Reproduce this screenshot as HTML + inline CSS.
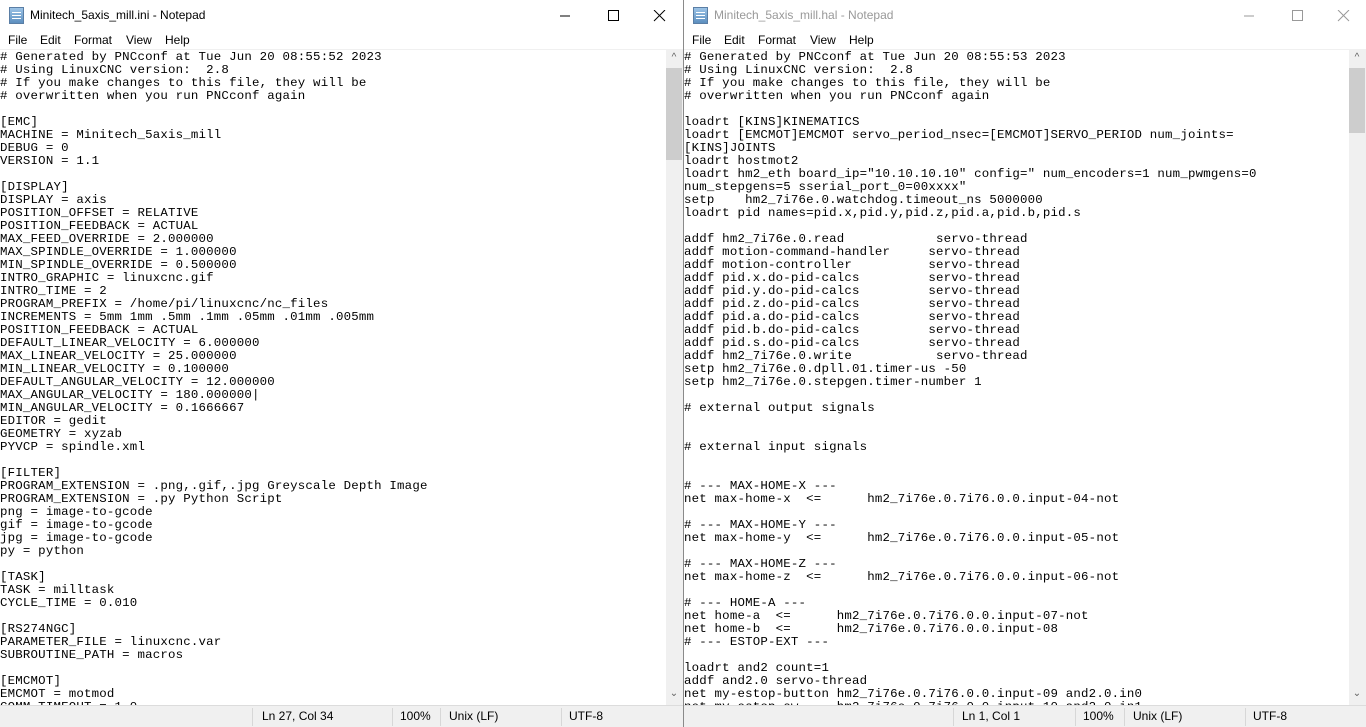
<!DOCTYPE html>
<html><head><meta charset="utf-8"><style>
*{margin:0;padding:0;box-sizing:border-box}
body{width:1366px;height:727px;overflow:hidden;background:#fff;font-family:"Liberation Sans",sans-serif;position:relative}
.win{position:absolute;top:0;height:727px;background:#fff;overflow:hidden}
.title{position:absolute;top:0;left:0;right:0;height:31px;font-size:12px;line-height:31px;padding-left:30px;color:#000}
.icon{position:absolute;left:9px;top:7px;width:15px;height:17px;background:linear-gradient(#9cc3e6,#5d8fbf);border:1px solid #5a7ea5}
.icon:before{content:"";position:absolute;left:2px;right:2px;top:4px;height:8px;background:repeating-linear-gradient(#fff 0 1px,transparent 1px 3px)}
.menu{position:absolute;top:32px;left:0;height:17px;font-size:12px;line-height:17px}
.menu span{position:absolute;top:0}
.text{position:absolute;top:51px;left:0;font-family:"Liberation Mono",monospace;font-size:12.4px;letter-spacing:0.2px;line-height:13px;white-space:pre;color:#000}
.sep{position:absolute;top:49px;left:0;right:0;height:1px;background:#f0f0f0}
.sb{position:absolute;top:50px;width:17px;height:655px;background:#f0f0f0}
.thumb{position:absolute;left:0;width:16px;background:#cdcdcd}
.arr{position:absolute;left:0;width:16px;font-size:10px;text-align:center;color:#606060}
.status{position:absolute;left:0;right:0;top:705px;height:22px;background:#f0f0f0;border-top:1px solid #dcdcdc;font-size:12px;line-height:21px}
.status span{position:absolute;top:0}
.status i{position:absolute;top:2px;width:1px;height:18px;background:#d7d7d7}
</style></head><body>

<div class="win" style="left:0;width:683px">
<div class="icon"></div>
<div class="title">Minitech_5axis_mill.ini - Notepad</div>
<svg style="position:absolute;left:560px;top:10px" width="110" height="12"><path d="M0 6H10" stroke="#000"/><rect x="48.5" y="0.5" width="10" height="10" fill="none" stroke="#000"/><path d="M94 0L105 11M105 0L94 11" stroke="#000"/></svg>
<div class="menu"><span style="left:8px">File</span><span style="left:40px">Edit</span><span style="left:74px">Format</span><span style="left:126px">View</span><span style="left:165px">Help</span></div>
<div class="sep"></div>
<div class="text"># Generated by PNCconf at Tue Jun 20 08:55:52 2023
# Using LinuxCNC version:  2.8
# If you make changes to this file, they will be
# overwritten when you run PNCconf again

[EMC]
MACHINE = Minitech_5axis_mill
DEBUG = 0
VERSION = 1.1

[DISPLAY]
DISPLAY = axis
POSITION_OFFSET = RELATIVE
POSITION_FEEDBACK = ACTUAL
MAX_FEED_OVERRIDE = 2.000000
MAX_SPINDLE_OVERRIDE = 1.000000
MIN_SPINDLE_OVERRIDE = 0.500000
INTRO_GRAPHIC = linuxcnc.gif
INTRO_TIME = 2
PROGRAM_PREFIX = /home/pi/linuxcnc/nc_files
INCREMENTS = 5mm 1mm .5mm .1mm .05mm .01mm .005mm
POSITION_FEEDBACK = ACTUAL
DEFAULT_LINEAR_VELOCITY = 6.000000
MAX_LINEAR_VELOCITY = 25.000000
MIN_LINEAR_VELOCITY = 0.100000
DEFAULT_ANGULAR_VELOCITY = 12.000000
MAX_ANGULAR_VELOCITY = 180.000000|
MIN_ANGULAR_VELOCITY = 0.1666667
EDITOR = gedit
GEOMETRY = xyzab
PYVCP = spindle.xml

[FILTER]
PROGRAM_EXTENSION = .png,.gif,.jpg Greyscale Depth Image
PROGRAM_EXTENSION = .py Python Script
png = image-to-gcode
gif = image-to-gcode
jpg = image-to-gcode
py = python

[TASK]
TASK = milltask
CYCLE_TIME = 0.010

[RS274NGC]
PARAMETER_FILE = linuxcnc.var
SUBROUTINE_PATH = macros

[EMCMOT]
EMCMOT = motmod
COMM_TIMEOUT = 1.0</div>
<div class="sb" style="left:666px"><div class="arr" style="top:2px">&#94;</div><div class="thumb" style="top:18px;height:92px"></div><div class="arr" style="top:638px">&#8964;</div></div>
<div class="status"><i style="left:252px"></i><span style="left:262px">Ln 27, Col 34</span><i style="left:392px"></i><span style="left:400px">100%</span><i style="left:440px"></i><span style="left:449px">Unix (LF)</span><i style="left:561px"></i><span style="left:569px">UTF-8</span></div>
</div>

<div style="position:absolute;left:683px;top:0;width:1px;height:727px;background:#8a8a8a"></div>

<div class="win" style="left:684px;width:682px">
<div class="icon"></div>
<div class="title" style="color:#999">Minitech_5axis_mill.hal - Notepad</div>
<svg style="position:absolute;left:560px;top:10px" width="110" height="12"><path d="M0 6H10" stroke="#999"/><rect x="48.5" y="0.5" width="10" height="10" fill="none" stroke="#999"/><path d="M94 0L105 11M105 0L94 11" stroke="#999"/></svg>
<div class="menu"><span style="left:8px">File</span><span style="left:40px">Edit</span><span style="left:74px">Format</span><span style="left:126px">View</span><span style="left:165px">Help</span></div>
<div class="sep"></div>
<div class="text"># Generated by PNCconf at Tue Jun 20 08:55:53 2023
# Using LinuxCNC version:  2.8
# If you make changes to this file, they will be
# overwritten when you run PNCconf again

loadrt [KINS]KINEMATICS
loadrt [EMCMOT]EMCMOT servo_period_nsec=[EMCMOT]SERVO_PERIOD num_joints=
[KINS]JOINTS
loadrt hostmot2
loadrt hm2_eth board_ip="10.10.10.10" config=" num_encoders=1 num_pwmgens=0
num_stepgens=5 sserial_port_0=00xxxx"
setp    hm2_7i76e.0.watchdog.timeout_ns 5000000
loadrt pid names=pid.x,pid.y,pid.z,pid.a,pid.b,pid.s

addf hm2_7i76e.0.read            servo-thread
addf motion-command-handler     servo-thread
addf motion-controller          servo-thread
addf pid.x.do-pid-calcs         servo-thread
addf pid.y.do-pid-calcs         servo-thread
addf pid.z.do-pid-calcs         servo-thread
addf pid.a.do-pid-calcs         servo-thread
addf pid.b.do-pid-calcs         servo-thread
addf pid.s.do-pid-calcs         servo-thread
addf hm2_7i76e.0.write           servo-thread
setp hm2_7i76e.0.dpll.01.timer-us -50
setp hm2_7i76e.0.stepgen.timer-number 1

# external output signals


# external input signals


# --- MAX-HOME-X ---
net max-home-x  &lt;=      hm2_7i76e.0.7i76.0.0.input-04-not

# --- MAX-HOME-Y ---
net max-home-y  &lt;=      hm2_7i76e.0.7i76.0.0.input-05-not

# --- MAX-HOME-Z ---
net max-home-z  &lt;=      hm2_7i76e.0.7i76.0.0.input-06-not

# --- HOME-A ---
net home-a  &lt;=      hm2_7i76e.0.7i76.0.0.input-07-not
net home-b  &lt;=      hm2_7i76e.0.7i76.0.0.input-08
# --- ESTOP-EXT ---

loadrt and2 count=1
addf and2.0 servo-thread
net my-estop-button hm2_7i76e.0.7i76.0.0.input-09 and2.0.in0
net my-estop-sw     hm2_7i76e.0.7i76.0.0.input-10 and2.0.in1</div>
<div class="sb" style="left:665px"><div class="arr" style="top:2px">&#94;</div><div class="thumb" style="top:18px;height:65px"></div><div class="arr" style="top:638px">&#8964;</div></div>
<div class="status"><i style="left:269px"></i><span style="left:278px">Ln 1, Col 1</span><i style="left:391px"></i><span style="left:399px">100%</span><i style="left:440px"></i><span style="left:449px">Unix (LF)</span><i style="left:561px"></i><span style="left:569px">UTF-8</span></div>
</div>
</body></html>
